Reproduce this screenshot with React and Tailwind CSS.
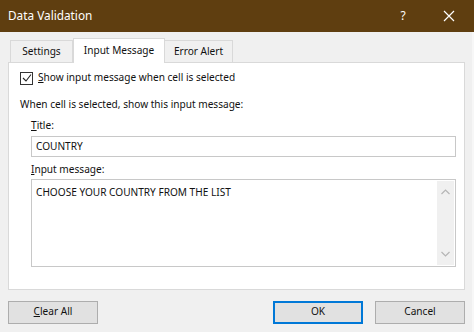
import React from "react";

const font = { fontFamily: '"Noto Sans", "Open Sans", sans-serif' };

const App = () => {
  return (
    <div
      className="w-[474px] h-[332px] bg-[#f0f0f0] flex flex-col text-[10.1px] text-[#111] overflow-hidden"
      style={font}
    >
      {/* title bar */}
      <div className="h-[32px] bg-[#5f3e10] flex items-center text-white shrink-0">
        <div className="pl-[8px] text-[11.8px] flex-1">Data Validation</div>
        <div className="w-[30px] text-center text-[12px] mr-[16px]">?</div>
        <div className="w-[30px] flex justify-center mr-[10px]">
          <svg width="12" height="12" viewBox="0 0 12 12">
            <path d="M1 1 L11 11 M11 1 L1 11" stroke="white" strokeWidth="1.2" />
          </svg>
        </div>
      </div>

      <div className="flex-1 flex flex-col pl-[8px] pr-[7px] pt-[6px] border-r-[2px] border-[#f7f7f7]">
        {/* tabs */}
        <div className="flex items-end h-[24px] pl-[2px]">
          <div className="h-[22px] w-[63px] flex items-center justify-center bg-[#f0f0f0] border border-b-0 border-[#d9d9d9]">
            Settings
          </div>
          <div className="h-[25px] w-[92px] flex items-center justify-center bg-white border border-b-0 border-[#d9d9d9] -mb-px relative z-10">
            Input Message
          </div>
          <div className="h-[22px] w-[68px] flex items-center justify-center bg-[#f0f0f0] border border-b-0 border-l-0 border-[#d9d9d9]">
            Error Alert
          </div>
        </div>

        {/* panel */}
        <div className="h-[228px] bg-white border border-[#d9d9d9] flex flex-col pl-[11px] pr-[9px]">
          <div className="flex items-center mt-[7px] h-[16px]">
            <div className="w-[13px] h-[13px] border border-[#333] flex items-center justify-center">
              <svg width="10" height="10" viewBox="0 0 10 10">
                <path d="M1 5 L4 8 L9 1.5" stroke="#222" strokeWidth="1.1" fill="none" />
              </svg>
            </div>
            <span className="ml-[5px]">
              <span className="underline">S</span>how input message when cell is selected
            </span>
          </div>

          <div className="mt-[11px] h-[16px] flex items-center">
            When cell is selected, show this input message:
          </div>

          <div className="ml-[11px] flex flex-col">
            <div className="mt-[5px] h-[16px] flex items-center">
              <span className="underline">T</span>itle:
            </div>
            <div className="mt-[2px] h-[21px] border border-[#c8c8c8] flex items-center px-[4px] w-[425px]">
              COUNTRY
            </div>
            <div className="mt-[4px] h-[17px] flex items-center">
              <span className="underline">I</span>nput message:
            </div>
            <div className="mt-[1px] h-[88px] w-[425px] border border-[#c8c8c8] flex">
              <div className="flex-1 px-[4px] pt-[5px]">CHOOSE YOUR COUNTRY FROM THE LIST</div>
              <div className="w-[17px] bg-[#f0f0f0] flex flex-col items-center justify-between py-[8px] my-[1px] mr-[1px]">
                <svg width="9" height="6" viewBox="0 0 9 6">
                  <path d="M0.5 5 L4.5 1 L8.5 5" stroke="#b5b5b5" strokeWidth="1.2" fill="none" />
                </svg>
                <svg width="9" height="6" viewBox="0 0 9 6">
                  <path d="M0.5 1 L4.5 5 L8.5 1" stroke="#b5b5b5" strokeWidth="1.2" fill="none" />
                </svg>
              </div>
            </div>
          </div>
        </div>

        {/* buttons */}
        <div className="flex items-center mt-[10px] h-[24px]">
          <button className="w-[90px] h-[23px] bg-[#e1e1e1] border border-[#adadad]">
            <span className="underline">C</span>lear All
          </button>
          <div className="flex-1" />
          <button className="w-[90px] h-[23px] bg-[#e1e1e1] border-2 border-[#0078d7]">
            OK
          </button>
          <button className="w-[90px] h-[23px] bg-[#e1e1e1] border border-[#adadad] ml-[12px]">
            Cancel
          </button>
        </div>
      </div>
    </div>
  );
};

export default App;
